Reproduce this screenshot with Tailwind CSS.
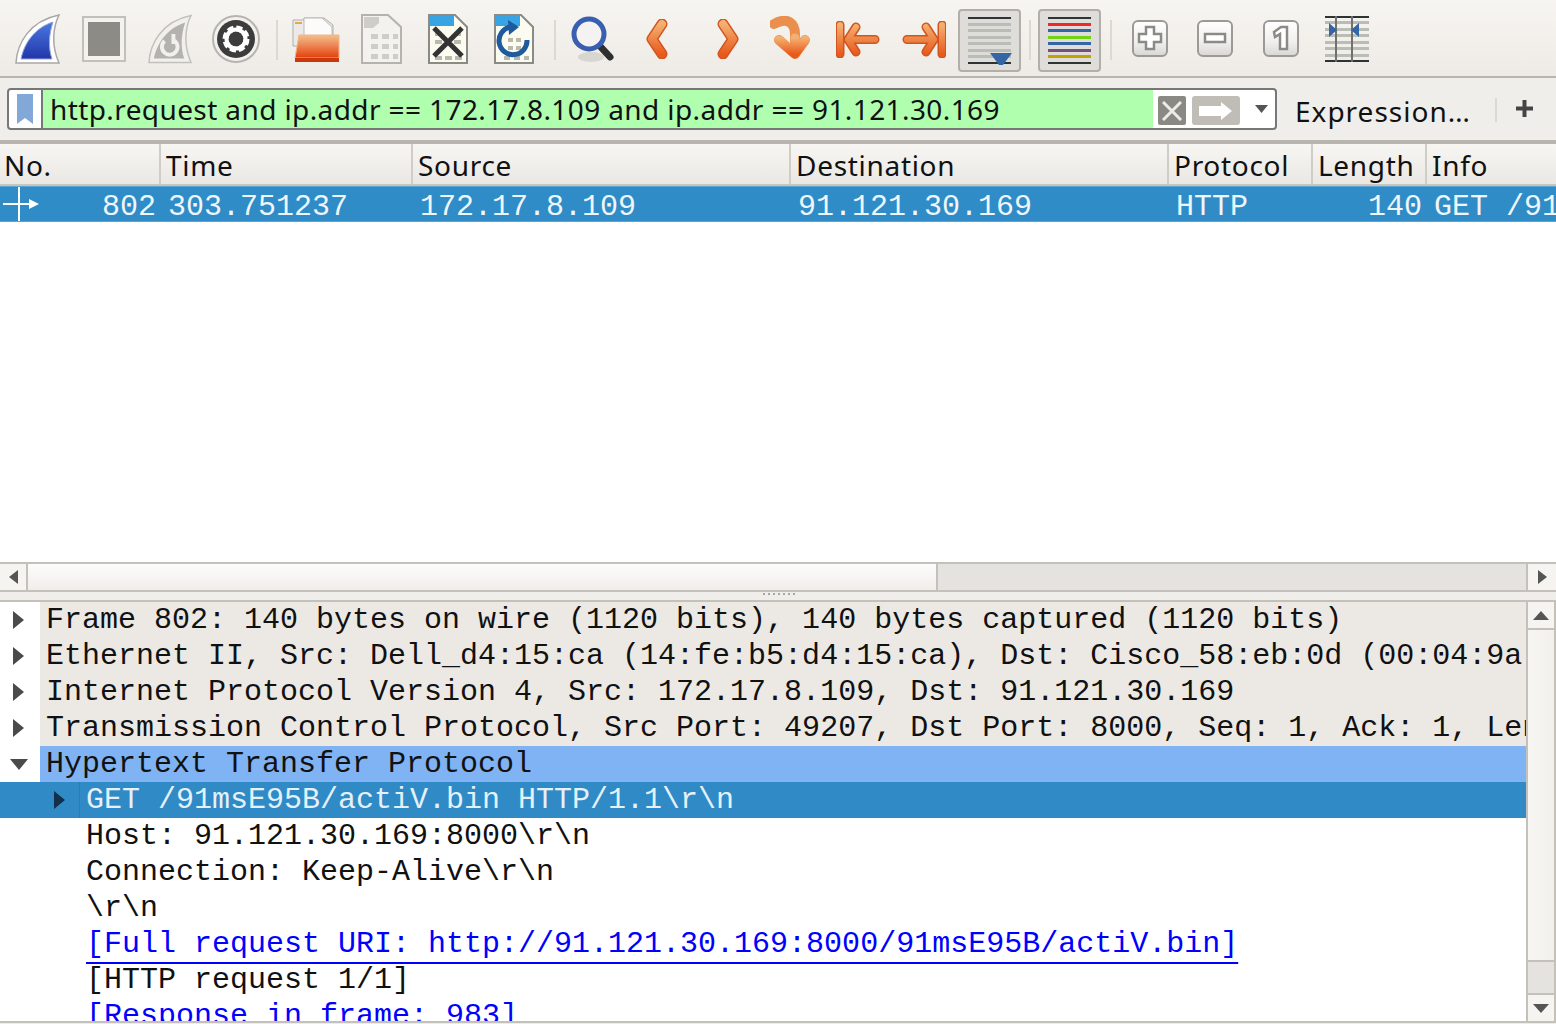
<!DOCTYPE html>
<html>
<head>
<meta charset="utf-8">
<script src="https://cdn.jsdelivr.net/npm/@tailwindcss/browser@4"></script>
</head>
<body class="bg-white">
<svg class="absolute w-0 h-0" aria-hidden="true"><defs>
<linearGradient id="o" x1="0" y1="0" x2="0" y2="1"><stop offset="0" stop-color="#f4b071"/><stop offset="1" stop-color="#e85a1c"/></linearGradient>
<linearGradient id="b" x1="0" y1="0" x2="0" y2="1"><stop offset="0" stop-color="#4a78e0"/><stop offset="1" stop-color="#2236a8"/></linearGradient>
<linearGradient id="f" x1="0" y1="0" x2="0" y2="1"><stop offset="0" stop-color="#f4c08e"/><stop offset="1" stop-color="#e43f0c"/></linearGradient>
<linearGradient id="k" x1="0" y1="0" x2="0" y2="1"><stop offset="0" stop-color="#ffffff"/><stop offset="0.6" stop-color="#f0efed"/><stop offset="1" stop-color="#d8d7d3"/></linearGradient>
</defs></svg>
<div class="w-[1556px] h-[1024px] overflow-hidden flex flex-col font-['Noto_Sans',sans-serif] text-[#111]">

<!-- toolbar -->
<div class="h-[78px] shrink-0 flex items-start bg-gradient-to-b from-[#f7f5f1] to-[#eeebe6] border-b-2 border-[#b8b4ae] relative">
  <svg class="ml-[15px] mt-[14px]" width="45" height="50" viewBox="0 0 45 50"><path d="M1 49C2 30 14 7 44 1C38 13 36 31 44 49Z" fill="#fff" stroke="#a9a8a5" stroke-width="1.5"/><path d="M6 45C9 30 19 14 38 8C34 20 33 33 37 45Z" fill="url(#b)" stroke="#9aa8de" stroke-width="1"/></svg>
  <svg class="ml-[22px] mt-[16px]" width="44" height="46" viewBox="0 0 44 46"><rect x="1" y="1" width="42" height="44" fill="#f3f2ee" stroke="#c2c0bb" stroke-width="2"/><rect x="6" y="6" width="32" height="34" fill="#8d8b86"/></svg>
  <svg class="ml-[22px] mt-[14px]" width="44" height="50" viewBox="0 0 45 50"><path d="M1 49C2 30 14 7 44 1C38 13 36 31 44 49Z" fill="#f1f0ec" stroke="#c2c0bb" stroke-width="1.5"/><path d="M6 45C9 30 19 14 38 8C34 20 33 33 37 45Z" fill="#b4b2ae"/><path d="M17 27a8 8 0 1 0 9 -1M26 20v10" fill="none" stroke="#f1f0ec" stroke-width="4"/></svg>
  <svg class="ml-[20px] mt-[14px]" width="48" height="50" viewBox="0 0 48 50"><circle cx="24" cy="25" r="23" fill="#f2f1ed" stroke="#b6b4b0" stroke-width="2"/><circle cx="24" cy="25" r="19" fill="#3c3c3c"/><circle cx="24" cy="25" r="10.5" fill="none" stroke="#fff" stroke-width="6" stroke-dasharray="5.5 2.75"/><circle cx="24" cy="25" r="9.5" fill="none" stroke="#fff" stroke-width="4"/></svg>
  <div class="ml-[16px] mt-[20px] w-[2px] h-[40px] bg-[#dcd9d4]"></div>
  <svg class="ml-[14px] mt-[16px]" width="49" height="47" viewBox="0 0 49 47"><path d="M1 4H12V2H32L41 9V30H1Z" fill="#eceae6" stroke="#b0aeaa"/><path d="M12 2H30L40 11V32H12Z" fill="#fbfbfa" stroke="#bdbbb7"/><rect x="3" y="6" width="7" height="2" fill="#e9a54a"/><path d="M7 19H47V42H3Z" fill="url(#f)" stroke="#f2b48a"/><path d="M3 42H47V46H3Z" fill="#c9390c"/></svg>
  <svg class="ml-[20px] mt-[14px]" width="41" height="50" viewBox="0 0 41 50"><path d="M1 1H27L40 13V49H1Z" fill="#f3f2ee" stroke="#b5b3af" stroke-width="2"/><path d="M3 3H18V9L12 14H3Z" fill="#cfcdc9"/><path d="M10 20h7v5h-7zM21 20h7v5h-7zM32 20h5v5h-5zM10 30h7v5h-7zM21 30h7v5h-7zM32 30h5v5h-5zM10 40h7v5h-7zM21 40h7v5h-7zM32 40h5v5h-5z" fill="#cfcdc9"/></svg>
  <svg class="ml-[26px] mt-[14px]" width="40" height="50" viewBox="0 0 40 50"><path d="M1 1H27L39 13V49H1Z" fill="#fbfbf0" stroke="#8a8a86" stroke-width="2"/><path d="M2 2H26V12H2Z" fill="#38a4e4"/><path d="M7 18h7v4h-7zM26 18h7v4h-7zM7 26h7v4h-7zM26 26h7v4h-7zM7 42h7v4h-7zM17 42h7v4h-7zM27 42h7v4h-7z" fill="#b9b9ae"/><path d="M6 14L34 42M34 14L6 42" stroke="#333" stroke-width="5"/></svg>
  <svg class="ml-[26px] mt-[14px]" width="40" height="50" viewBox="0 0 40 50"><path d="M1 1H27L39 13V49H1Z" fill="#fbfbf0" stroke="#8a8a86" stroke-width="2"/><path d="M2 2H26V12H2Z" fill="#38a4e4"/><path d="M14 24h5v4h-5zM22 24h5v4h-5zM14 32h5v4h-5zM22 32h5v4h-5zM10 42h6v4h-6zM20 42h6v4h-6zM30 42h5v4h-5z" fill="#b9b9ae"/><path d="M16 13a14 14 0 1 0 17 13" fill="none" stroke="#1f5a9e" stroke-width="5"/><path d="M14 6L25 13L15 21Z" fill="#1f5a9e"/></svg>
  <div class="ml-[20px] mt-[20px] w-[2px] h-[40px] bg-[#dcd9d4]"></div>
  <svg class="ml-[15px] mt-[16px]" width="44" height="47" viewBox="0 0 44 47"><ellipse cx="20" cy="41" rx="13" ry="5" fill="#d8d6d1"/><path d="M27 28L39 41" stroke="#2f2f2f" stroke-width="7" stroke-linecap="round"/><circle cx="18" cy="18" r="15" fill="#f4f3f1" stroke="#3a5fb0" stroke-width="5"/></svg>
  <svg class="ml-[31px] mt-[19px]" width="22" height="40" viewBox="0 0 22 40"><path d="M16 5L6 20L16 35" fill="none" stroke="#d0551f" stroke-width="11" stroke-linecap="round" stroke-linejoin="round"/><path d="M16 5L6 20L16 35" fill="none" stroke="url(#o)" stroke-width="8" stroke-linecap="round" stroke-linejoin="round"/></svg>
  <svg class="ml-[49px] mt-[19px]" width="22" height="40" viewBox="0 0 22 40"><path d="M6 5L16 20L6 35" fill="none" stroke="#d0551f" stroke-width="11" stroke-linecap="round" stroke-linejoin="round"/><path d="M6 5L16 20L6 35" fill="none" stroke="url(#o)" stroke-width="8" stroke-linecap="round" stroke-linejoin="round"/></svg>
  <svg class="ml-[31px] mt-[16px]" width="40" height="44" viewBox="0 0 40 44"><path d="M4 8C18 0 25 8 25 18V36M9 24L25 38L35 24" fill="none" stroke="#eb8f4e" stroke-width="10" stroke-linejoin="round" stroke-linecap="round"/><path d="M25 22V36M9 24L25 38L35 24" fill="none" stroke="url(#o)" stroke-width="9" stroke-linejoin="round" stroke-linecap="round"/></svg>
  <svg class="ml-[26px] mt-[21px]" width="44" height="37" viewBox="0 0 44 37"><path d="M4 4V33M20 6L12 18.5L20 31M12 18.5H39" fill="none" stroke="#d0551f" stroke-width="9" stroke-linecap="round" stroke-linejoin="round"/><path d="M4 4V33M20 6L12 18.5L20 31M12 18.5H39" fill="none" stroke="url(#o)" stroke-width="6" stroke-linecap="round" stroke-linejoin="round"/></svg>
  <svg class="ml-[22px] mt-[21px]" width="44" height="37" viewBox="0 0 44 37"><path d="M40 4V33M24 6L32 18.5L24 31M32 18.5H5" fill="none" stroke="#d0551f" stroke-width="9" stroke-linecap="round" stroke-linejoin="round"/><path d="M40 4V33M24 6L32 18.5L24 31M32 18.5H5" fill="none" stroke="url(#o)" stroke-width="6" stroke-linecap="round" stroke-linejoin="round"/></svg>
  <div class="ml-[12px] mt-[9px] w-[63px] h-[63px] rounded-[4px] border-2 border-[#b2aea8] bg-[#dfddd9] flex flex-col justify-between py-[6px] px-[8px] relative">
    <div class="h-[2px] bg-[#2e3436]"></div><div class="h-[3px] bg-[#babdb6]"></div><div class="h-[3px] bg-[#babdb6]"></div><div class="h-[3px] bg-[#babdb6]"></div><div class="h-[3px] bg-[#babdb6]"></div><div class="h-[3px] bg-[#babdb6]"></div><div class="h-[3px] bg-[#babdb6]"></div><div class="h-[2px] bg-[#2e3436]"></div>
    <svg class="absolute left-[29px] top-[41px]" width="24" height="14" viewBox="0 0 24 14"><path d="M1 1H23L14 13H10Z" fill="#3465a4"/></svg>
  </div>
  <div class="ml-[8px] mt-[20px] w-[2px] h-[40px] bg-[#dcd9d4]"></div>
  <div class="ml-[7px] mt-[9px] w-[63px] h-[63px] rounded-[4px] border-2 border-[#b2aea8] bg-[#dfddd9] flex flex-col justify-between py-[6px] px-[8px]">
    <div class="h-[2px] bg-[#2e3436]"></div><div class="h-[3px] bg-[#ef2929]"></div><div class="h-[3px] bg-[#3465a4]"></div><div class="h-[3px] bg-[#73d216]"></div><div class="h-[3px] bg-[#3465a4]"></div><div class="h-[3px] bg-[#75507b]"></div><div class="h-[3px] bg-[#c4a000]"></div><div class="h-[2px] bg-[#2e3436]"></div>
  </div>
  <div class="ml-[9px] mt-[20px] w-[2px] h-[40px] bg-[#dcd9d4]"></div>
  <svg class="ml-[20px] mt-[20px]" width="36" height="38" viewBox="0 0 36 38"><rect x="1" y="1" width="34" height="35" rx="5" fill="url(#k)" stroke="#9a9a96" stroke-width="2"/><path d="M14 7H22V14H29V22H22V29H14V22H7V14H14Z" fill="#fff" stroke="#8a8a86" stroke-width="2.5"/></svg>
  <svg class="ml-[29px] mt-[20px]" width="36" height="38" viewBox="0 0 36 38"><rect x="1" y="1" width="34" height="35" rx="5" fill="url(#k)" stroke="#9a9a96" stroke-width="2"/><rect x="8" y="14" width="20" height="8" fill="#fff" stroke="#8a8a86" stroke-width="2.5"/></svg>
  <svg class="ml-[30px] mt-[20px]" width="36" height="38" viewBox="0 0 36 38"><rect x="1" y="1" width="34" height="35" rx="5" fill="url(#k)" stroke="#9a9a96" stroke-width="2"/><path d="M11 12L18 7H24V29H17V14L12 17Z" fill="#fff" stroke="#8a8a86" stroke-width="2.5"/></svg>
  <div class="ml-[26px] mt-[16px] w-[44px] h-[46px] flex flex-col justify-between relative">
    <div class="h-[2px] bg-[#2e3436]"></div><div class="h-[3px] bg-[#babdb6]"></div><div class="h-[3px] bg-[#babdb6]"></div><div class="h-[3px] bg-[#babdb6]"></div><div class="h-[3px] bg-[#babdb6]"></div><div class="h-[3px] bg-[#babdb6]"></div><div class="h-[3px] bg-[#babdb6]"></div><div class="h-[2px] bg-[#2e3436]"></div>
    <div class="absolute left-[10px] top-0 w-[2px] h-full bg-[#70706c]"></div>
    <div class="absolute left-[26px] top-0 w-[2px] h-full bg-[#70706c]"></div>
    <svg class="absolute left-[4px] top-[7px]" width="36" height="14" viewBox="0 0 36 14"><path d="M0 0L8 7L0 14ZM30 0V14L22 7Z" fill="#3465a4"/></svg>
  </div>
</div>

<!-- filter row -->
<div class="h-[66px] shrink-0 bg-[#f0eeea] border-b-[4px] border-[#b8b4ae] flex items-start relative">
  <div class="ml-[7px] mt-[10px] w-[1270px] h-[42px] rounded-[4px] border-2 border-[#777] bg-white flex items-stretch">
    <div class="w-[34px] flex justify-center items-center border-r-2 border-[#777] shrink-0">
      <svg width="18" height="32" viewBox="0 0 18 32"><path d="M1 1H17V31L9 25L1 31Z" fill="#82a8d8"/></svg>
    </div>
    <div class="w-[1110px] bg-[#afffaf] pl-[7px] text-[28px] leading-[38px] tracking-[0.4px] whitespace-nowrap">http.request and ip.addr == 172.17.8.109 and ip.addr == 91.121.30.169</div>
    <div class="w-[28px] h-[29px] ml-[5px] mt-[6px] bg-[#8a8984] rounded-[2px] flex items-center justify-center">
      <svg width="20" height="20" viewBox="0 0 20 20"><path d="M1 1L19 19M19 1L1 19" stroke="#eeece8" stroke-width="3"/></svg>
    </div>
    <div class="w-[48px] h-[29px] ml-[6px] mt-[6px] bg-[#c0bcb6] rounded-[3px] flex items-center justify-center">
      <svg width="34" height="20" viewBox="0 0 34 20"><path d="M0 5H22V1L33 10L22 19V15H0Z" fill="#fff"/></svg>
    </div>
    <svg class="ml-[15px] mt-[15px]" width="13" height="8" viewBox="0 0 13 8"><path d="M0 0H13L6.5 8Z" fill="#555"/></svg>
  </div>
  <div class="ml-[18px] mt-[11px] text-[28px] leading-[44px] tracking-[1px]">Expression…</div>
  <div class="absolute left-[1495px] top-[20px] w-[2px] h-[24px] bg-[#dcd9d4]"></div>
  <svg class="absolute left-[1516px] top-[22px]" width="17" height="17" viewBox="0 0 17 17"><path d="M6.500 0H10.500V6.500H17V10.500H10.500V17H6.500V10.500H0V6.500H6.500Z" fill="#444"/></svg>
</div>

<!-- packet list header -->
<div class="h-[42px] shrink-0 flex bg-gradient-to-b from-[#f8f6f3] to-[#eae8e3] border-b-2 border-[#c8c5bf] text-[28px] leading-[42px] tracking-[0.7px]">
  <div class="w-[161px] pl-[4px] border-r-2 border-[#d0cdc8]">No.</div>
  <div class="w-[252px] pl-[5px] border-r-2 border-[#d0cdc8]">Time</div>
  <div class="w-[378px] pl-[5px] border-r-2 border-[#d0cdc8]">Source</div>
  <div class="w-[378px] pl-[5px] border-r-2 border-[#d0cdc8]">Destination</div>
  <div class="w-[144px] pl-[5px] border-r-2 border-[#d0cdc8]">Protocol</div>
  <div class="w-[114px] pl-[5px] border-r-2 border-[#d0cdc8]">Length</div>
  <div class="pl-[5px]">Info</div>
</div>

<!-- selected packet -->
<div class="h-[36px] shrink-0 flex bg-[#308cc6] border-y border-[#5aa3d2] text-[#eef6fb] font-['Liberation_Mono',monospace] text-[30px] leading-[40px] whitespace-nowrap overflow-hidden relative">
  <svg class="absolute left-[3px] top-[-1px]" width="36" height="36" viewBox="0 0 36 36"><path d="M16 0V36M0 18H26" stroke="#fff" stroke-width="2"/><path d="M26 13L36 18L26 23Z" fill="#fff"/></svg>
  <div class="w-[156px] text-right shrink-0">802</div>
  <div class="w-[252px] pl-[12px] shrink-0">303.751237</div>
  <div class="w-[378px] pl-[12px] shrink-0">172.17.8.109</div>
  <div class="w-[378px] pl-[12px] shrink-0">91.121.30.169</div>
  <div class="w-[144px] pl-[12px] shrink-0">HTTP</div>
  <div class="w-[114px] text-right shrink-0">140</div>
  <div class="pl-[12px] shrink-0">GET /91msE95B/actiV.bin HTTP/1.1</div>
</div>

<!-- empty list -->
<div class="h-[340px] shrink-0 bg-white"></div>

<!-- horizontal scrollbar -->
<div class="h-[30px] shrink-0 flex border-y-2 border-[#c4c1bb] bg-[#e4e3df]">
  <div class="w-[28px] border-r-2 border-[#c4c1bb] bg-[#f5f4f1] flex items-center justify-center">
    <svg width="9" height="14" viewBox="0 0 9 14"><path d="M9 0V14L0 7Z" fill="#555"/></svg>
  </div>
  <div class="w-[910px] bg-gradient-to-b from-[#fdfcfb] to-[#f0eeeb] border-r-2 border-[#c4c1bb]"></div>
  <div class="flex-1"></div>
  <div class="w-[30px] border-l-2 border-[#c4c1bb] bg-[#f5f4f1] flex items-center justify-center">
    <svg width="9" height="14" viewBox="0 0 9 14"><path d="M0 0V14L9 7Z" fill="#555"/></svg>
  </div>
</div>

<!-- splitter -->
<div class="h-[10px] shrink-0 bg-[#f0eeea] border-b-2 border-[#c4c1bb] relative">
  <div class="absolute left-[763px] top-[1px] w-[34px] h-[2px] bg-[repeating-linear-gradient(90deg,#a8a6a2_0,#a8a6a2_2px,transparent_2px,transparent_5px)]"></div>
</div>

<!-- details -->
<div class="h-[419px] shrink-0 flex overflow-hidden">
  <div class="w-[1526px] shrink-0 overflow-hidden font-['Liberation_Mono',monospace] text-[30px] leading-[36px] whitespace-nowrap">
    <div class="h-[36px] flex"><div class="w-[40px] shrink-0 flex items-center pl-[13px]"><svg width="11" height="18" viewBox="0 0 11 18"><path d="M0 0L11 9L0 18Z" fill="#4a4a4a"/></svg></div><div class="flex-1 bg-[#ece9e5] pl-[6px] overflow-hidden">Frame 802: 140 bytes on wire (1120 bits), 140 bytes captured (1120 bits)</div></div>
    <div class="h-[36px] flex"><div class="w-[40px] shrink-0 flex items-center pl-[13px]"><svg width="11" height="18" viewBox="0 0 11 18"><path d="M0 0L11 9L0 18Z" fill="#4a4a4a"/></svg></div><div class="flex-1 bg-[#ece9e5] pl-[6px] overflow-hidden">Ethernet II, Src: Dell_d4:15:ca (14:fe:b5:d4:15:ca), Dst: Cisco_58:eb:0d (00:04:9a</div></div>
    <div class="h-[36px] flex"><div class="w-[40px] shrink-0 flex items-center pl-[13px]"><svg width="11" height="18" viewBox="0 0 11 18"><path d="M0 0L11 9L0 18Z" fill="#4a4a4a"/></svg></div><div class="flex-1 bg-[#ece9e5] pl-[6px] overflow-hidden">Internet Protocol Version 4, Src: 172.17.8.109, Dst: 91.121.30.169</div></div>
    <div class="h-[36px] flex"><div class="w-[40px] shrink-0 flex items-center pl-[13px]"><svg width="11" height="18" viewBox="0 0 11 18"><path d="M0 0L11 9L0 18Z" fill="#4a4a4a"/></svg></div><div class="flex-1 bg-[#ece9e5] pl-[6px] overflow-hidden">Transmission Control Protocol, Src Port: 49207, Dst Port: 8000, Seq: 1, Ack: 1, Len: 134</div></div>
    <div class="h-[36px] flex"><div class="w-[40px] shrink-0 flex items-center pl-[10px]"><svg width="18" height="11" viewBox="0 0 18 11"><path d="M0 0H18L9 11Z" fill="#4a4a4a"/></svg></div><div class="flex-1 bg-[#80b3f3] pl-[6px]">Hypertext Transfer Protocol</div></div>
    <div class="h-[36px] flex bg-[#2f8ac6] text-[#e4f1f9]"><div class="w-[80px] shrink-0 flex items-center pl-[54px] border-r border-[#2a7cb2]"><svg width="11" height="18" viewBox="0 0 11 18"><path d="M0 0L11 9L0 18Z" fill="#12304a"/></svg></div><div class="pl-[6px]">GET /91msE95B/actiV.bin HTTP/1.1\r\n</div></div>
    <div class="h-[36px] pl-[86px]">Host: 91.121.30.169:8000\r\n</div>
    <div class="h-[36px] pl-[86px]">Connection: Keep-Alive\r\n</div>
    <div class="h-[36px] pl-[86px]">\r\n</div>
    <div class="h-[36px] pl-[86px] text-[#0000ff]"><span class="underline decoration-2 underline-offset-[10px] [text-decoration-skip-ink:none]">[Full request URI: http://91.121.30.169:8000/91msE95B/actiV.bin]</span></div>
    <div class="h-[36px] pl-[86px]">[HTTP request 1/1]</div>
    <div class="h-[36px] pl-[86px] text-[#0000ff]"><span class="underline decoration-2 underline-offset-[10px] [text-decoration-skip-ink:none]">[Response in frame: 983]</span></div>
  </div>
  <div class="w-[30px] shrink-0 flex flex-col border-x-2 border-[#c4c1bb]">
    <div class="h-[28px] shrink-0 bg-[#f5f4f1] border-b-2 border-[#c4c1bb] flex items-center justify-center"><svg width="16" height="9" viewBox="0 0 16 9"><path d="M8 0L16 9H0Z" fill="#555"/></svg></div>
    <div class="flex-1 bg-gradient-to-r from-[#f7f6f3] to-[#f2f0ed]"></div>
    <div class="h-[35px] shrink-0 bg-[#e4e3df] border-y-2 border-[#c4c1bb]"></div>
    <div class="h-[26px] shrink-0 bg-[#f5f4f1] flex items-center justify-center"><svg width="16" height="9" viewBox="0 0 16 9"><path d="M0 0H16L8 9Z" fill="#555"/></svg></div>
  </div>
</div>

<!-- bottom edge -->
<div class="h-[3px] shrink-0 border-t-2 border-[#c4c1bb] bg-[#eeece8]"></div>
</div>
</body>
</html>
